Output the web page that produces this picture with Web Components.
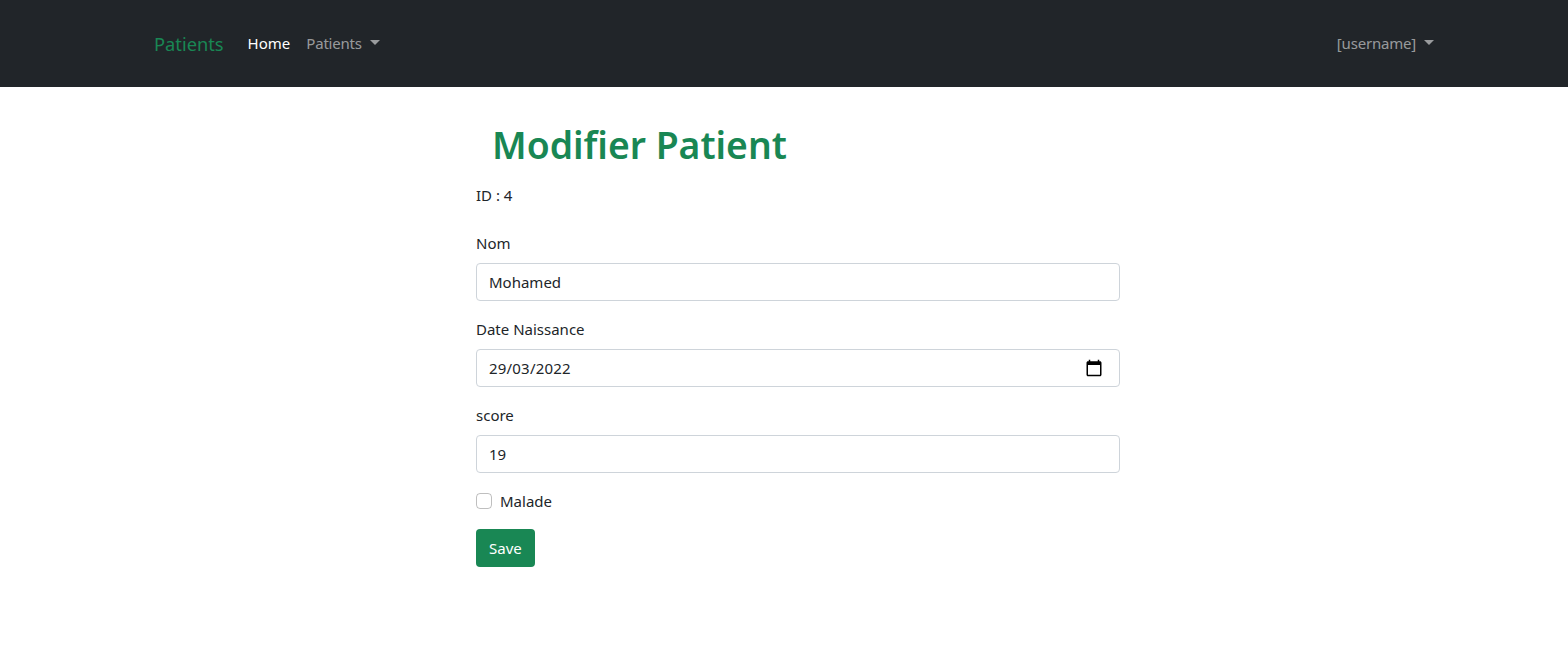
<!DOCTYPE html>
<html lang="fr">
<head>
<meta charset="utf-8">
<title>Modifier Patient</title>
<style>
  html, body { margin: 0; background: #fff; }
  body {
    font-family: "Noto Sans", "Open Sans", sans-serif;
    font-size: 15px;
    line-height: 24px;
    color: #212529;
  }
</style>
</head>
<body>
<app-navbar>
  <span slot="brand">Patients</span>
  <nav-link active>Home</nav-link>
  <nav-link caret>Patients</nav-link>
  <nav-link slot="end" caret>[username]</nav-link>
</app-navbar>
<patient-form>
  <span slot="title">Modifier Patient</span>
  <span slot="id">ID : 4</span>
  <form-field label="Nom">Mohamed</form-field>
  <form-field label="Date Naissance" date>29/03/2022</form-field>
  <form-field label="score">19</form-field>
  <form-check>Malade</form-check>
  <save-button>Save</save-button>
</patient-form>
<script>
  customElements.define('app-navbar', class extends HTMLElement {
    constructor() {
      super();
      this.attachShadow({ mode: 'open' }).innerHTML = `
<style>
  :host {
    display: flex;
    align-items: center;
    height: 87px;
    padding: 0 134px 0 154px;
    background: #212529;
  }
  .brand { font-size: 18.3px; color: #198754; margin-right: 24px; }
  .links { display: flex; gap: 16px; flex: 1; }
</style>
<span class="brand"><slot name="brand"></slot></span>
<div class="links"><slot></slot></div>
<slot name="end"></slot>
`;
    }
  });

  customElements.define('nav-link', class extends HTMLElement {
    constructor() {
      super();
      this.attachShadow({ mode: 'open' }).innerHTML = `
<style>
  :host { display: inline-flex; align-items: center; color: rgba(255,255,255,.55); margin-top: -1px; }
  :host([active]) { color: #fff; }
  :host([caret]) { letter-spacing: -.2px; }
  .caret { display: none; }
  :host([caret]) .caret {
    display: block;
    margin-left: 8px;
    width: 0;
    height: 0;
    border-top: 5px solid currentColor;
    border-left: 5px solid transparent;
    border-right: 5px solid transparent;
    margin-top: -2px;
  }
</style>
<slot></slot><span class="caret"></span>
`;
    }
  });

  customElements.define('patient-form', class extends HTMLElement {
    constructor() {
      super();
      this.attachShadow({ mode: 'open' }).innerHTML = `
<style>
  :host { display: block; width: 644px; margin-left: 476px; padding-top: 34px; }
  h1 {
    margin: 0 0 14px 16px;
    font-size: 37.3px;
    line-height: 48px;
    font-weight: 600;
    color: #198754;
  }
  p { margin: 0 0 24px; }
</style>
<h1><slot name="title"></slot></h1>
<p><slot name="id"></slot></p>
<slot></slot>
`;
    }
  });

  customElements.define('form-field', class extends HTMLElement {
    constructor() {
      super();
      this.attachShadow({ mode: 'open' }).innerHTML = `
<style>
  :host { display: block; margin-bottom: 16px; }
  label { display: block; margin-bottom: 8px; }
  .control {
    display: flex;
    align-items: center;
    justify-content: space-between;
    box-sizing: border-box;
    height: 38px;
    padding: 0 12px;
    border: 1px solid #ced4da;
    border-radius: 4px;
    background: #fff;
  }
  svg { display: none; width: 18px; height: 18px; margin-right: 4px; }
  :host([date]) svg { display: block; }
  :host([date]) span { letter-spacing: .2px; }
</style>
<label></label>
<div class="control">
  <span><slot></slot></span>
  <svg viewBox="0 0 24 24"><path d="M20 3h-1V1h-2v2H7V1H5v2H4c-1.1 0-2 .9-2 2v16c0 1.1.9 2 2 2h16c1.1 0 2-.9 2-2V5c0-1.1-.9-2-2-2zm0 18H4V8h16v13z"/></svg>
</div>
`;
      this.shadowRoot.querySelector('label').textContent = this.getAttribute('label');
    }
  });

  customElements.define('form-check', class extends HTMLElement {
    constructor() {
      super();
      this.attachShadow({ mode: 'open' }).innerHTML = `
<style>
  :host { display: flex; align-items: center; gap: 8px; margin-bottom: 16px; }
  .box {
    box-sizing: border-box;
    width: 16px;
    height: 16px;
    border: 1px solid rgba(0,0,0,.25);
    border-radius: 4px;
  }
</style>
<span class="box"></span><slot></slot>
`;
    }
  });

  customElements.define('save-button', class extends HTMLElement {
    constructor() {
      super();
      this.attachShadow({ mode: 'open' }).innerHTML = `
<style>
  :host {
    display: inline-block;
    padding: 7px 13px;
    border-radius: 4px;
    background: #198754;
    color: #fff;
  }
</style>
<slot></slot>
`;
    }
  });
</script>
</body>
</html>
